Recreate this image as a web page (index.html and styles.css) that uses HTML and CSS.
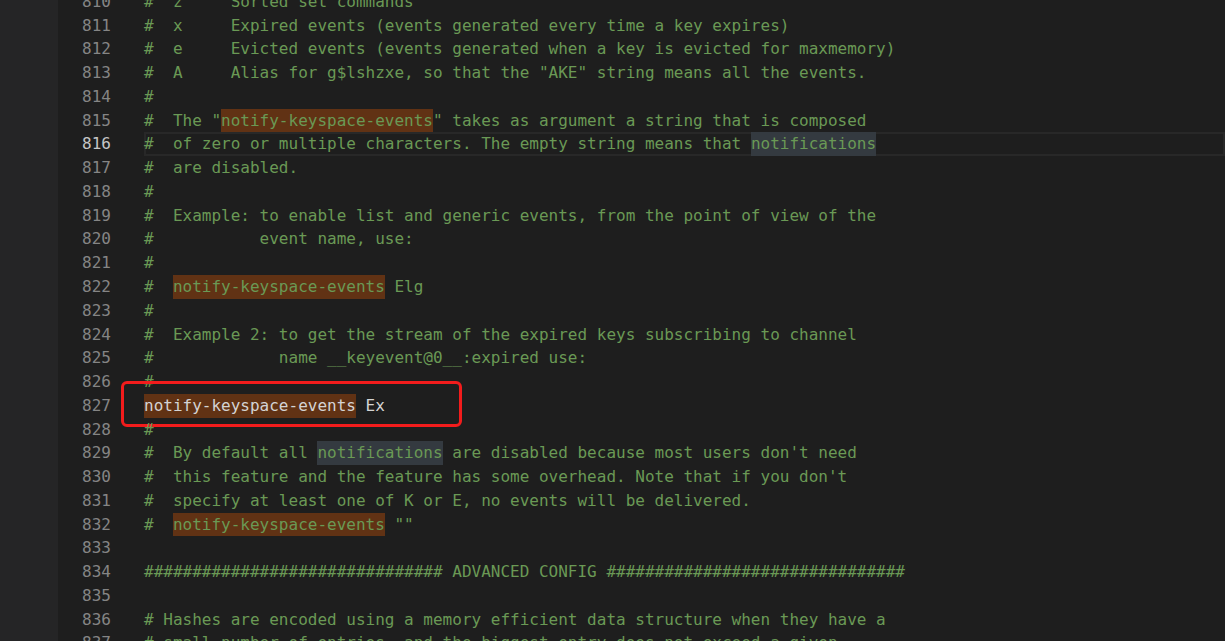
FILE: index.html
```html
<!DOCTYPE html>
<html>
<head>
<meta charset="utf-8">
<link rel="stylesheet" href="styles.css">
</head>
<body>
<div class="window">
  <div class="activity"></div>
  <div class="editor">
    <div class="lines">
      <div class="row"><span class="ln">810</span><span class="code c">#  z     Sorted set commands</span></div>
      <div class="row"><span class="ln">811</span><span class="code c">#  x     Expired events (events generated every time a key expires)</span></div>
      <div class="row"><span class="ln">812</span><span class="code c">#  e     Evicted events (events generated when a key is evicted for maxmemory)</span></div>
      <div class="row"><span class="ln">813</span><span class="code c">#  A     Alias for g$lshzxe, so that the "AKE" string means all the events.</span></div>
      <div class="row"><span class="ln">814</span><span class="code c">#</span></div>
      <div class="row"><span class="ln">815</span><span class="code c">#  The "<span class="fm">notify-keyspace-events</span>" takes as argument a string that is composed</span></div>
      <div class="row current"><span class="ln">816</span><span class="code c">#  of zero or multiple characters. The empty string means that <span class="sel">notifications</span></span></div>
      <div class="row"><span class="ln">817</span><span class="code c">#  are disabled.</span></div>
      <div class="row"><span class="ln">818</span><span class="code c">#</span></div>
      <div class="row"><span class="ln">819</span><span class="code c">#  Example: to enable list and generic events, from the point of view of the</span></div>
      <div class="row"><span class="ln">820</span><span class="code c">#           event name, use:</span></div>
      <div class="row"><span class="ln">821</span><span class="code c">#</span></div>
      <div class="row"><span class="ln">822</span><span class="code c">#  <span class="fm">notify-keyspace-events</span> Elg</span></div>
      <div class="row"><span class="ln">823</span><span class="code c">#</span></div>
      <div class="row"><span class="ln">824</span><span class="code c">#  Example 2: to get the stream of the expired keys subscribing to channel</span></div>
      <div class="row"><span class="ln">825</span><span class="code c">#             name __keyevent@0__:expired use:</span></div>
      <div class="row"><span class="ln">826</span><span class="code c">#</span></div>
      <div class="row"><span class="ln">827</span><span class="code plain"><span class="fm">notify-keyspace-events</span> Ex<span class="mark"></span></span></div>
      <div class="row"><span class="ln">828</span><span class="code c">#</span></div>
      <div class="row"><span class="ln">829</span><span class="code c">#  By default all <span class="sel">notifications</span> are disabled because most users don't need</span></div>
      <div class="row"><span class="ln">830</span><span class="code c">#  this feature and the feature has some overhead. Note that if you don't</span></div>
      <div class="row"><span class="ln">831</span><span class="code c">#  specify at least one of K or E, no events will be delivered.</span></div>
      <div class="row"><span class="ln">832</span><span class="code c">#  <span class="fm">notify-keyspace-events</span> ""</span></div>
      <div class="row"><span class="ln">833</span><span class="code c"></span></div>
      <div class="row"><span class="ln">834</span><span class="code c">############################### ADVANCED CONFIG ###############################</span></div>
      <div class="row"><span class="ln">835</span><span class="code c"></span></div>
      <div class="row"><span class="ln">836</span><span class="code c"># Hashes are encoded using a memory efficient data structure when they have a</span></div>
      <div class="row"><span class="ln">837</span><span class="code c"># small number of entries, and the biggest entry does not exceed a given</span></div>
    </div>
  </div>
</div>
</body>
</html>
```
FILE: styles.css
```css
html, body {
  margin: 0;
  padding: 0;
  background: #1e1e1e;
  overflow: hidden;
}
.window {
  display: flex;
  width: 1225px;
  height: 641px;
  overflow: hidden;
}
.activity {
  width: 58px;
  flex: none;
  background: #252526;
}
.editor {
  flex: 1;
  background: #1e1e1e;
  overflow: hidden;
}
.lines {
  margin-top: -10.2px;
  font-family: "DejaVu Sans Mono", "Liberation Mono", monospace;
  font-size: 16px;
  line-height: 23.77px;
}
.row {
  display: flex;
  height: 23.77px;
  white-space: pre;
}
.ln {
  width: 53px;
  flex: none;
  text-align: right;
  color: #858585;
  padding-right: 33px;
}
.code {
  flex: 1;
  position: relative;
  min-width: 0;
}
.current .ln {
  color: #c6c6c6;
}
.current .code {
  box-shadow: inset 0 0 0 2px #282828;
}
.c {
  color: #6a9955;
}
.plain {
  color: #d4d4d4;
}
.fm {
  display: inline-block;
  background: #613214;
  height: 23.77px;
  vertical-align: top;
}
.sel {
  display: inline-block;
  background: #343a40;
  height: 23.77px;
  vertical-align: top;
}
.mark {
  position: absolute;
  left: -23px;
  top: -13px;
  width: 335px;
  height: 40px;
  border: 3.5px solid #f21c1c;
  border-radius: 6px;
}
```
